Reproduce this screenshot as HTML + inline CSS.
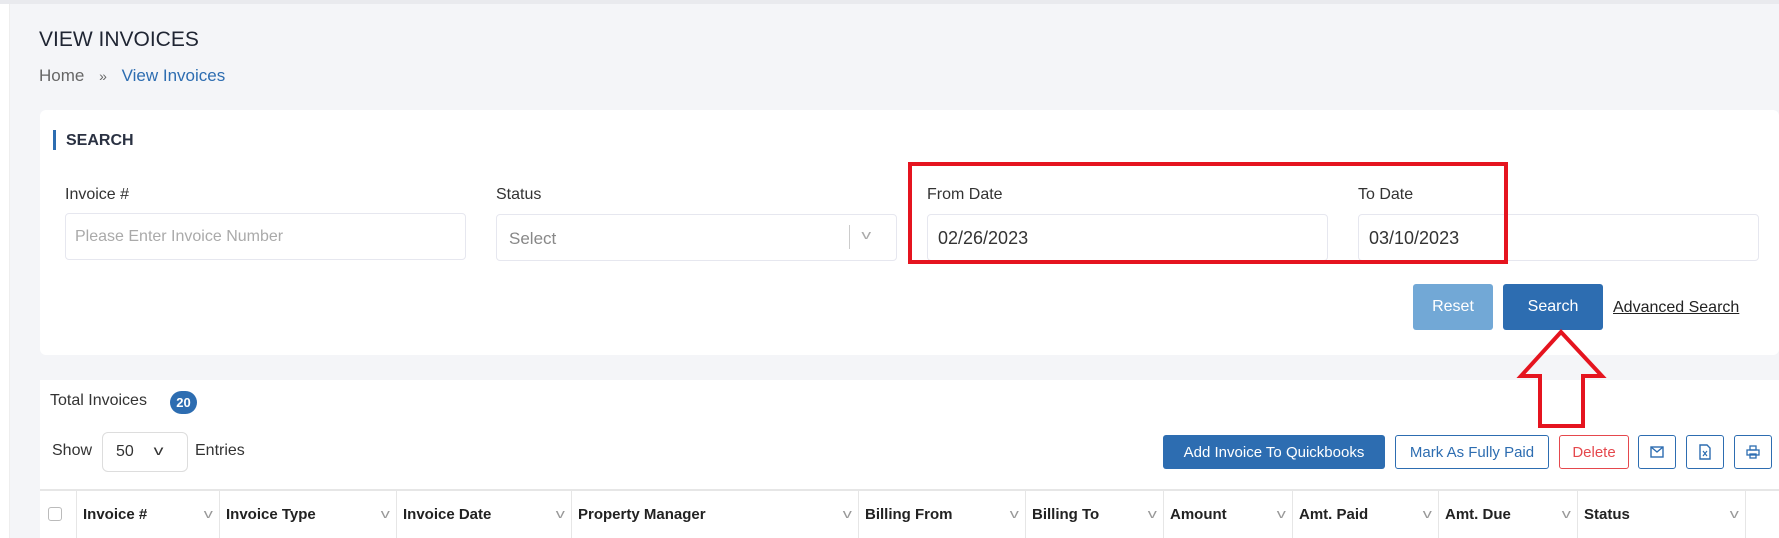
<!DOCTYPE html>
<html><head><meta charset="utf-8"><style>
*{box-sizing:border-box;margin:0;padding:0}
body{width:1779px;height:538px;overflow:hidden;background:#f4f5f8;font-family:"Liberation Sans",sans-serif;position:relative;color:#333}
.a{position:absolute}
.lbl{font-size:16px;color:#333}
.inp{position:absolute;border:1px solid #e6e7ef;border-radius:4px;background:#fff;height:47px}
.btn{position:absolute;border-radius:3px;font-size:15px;display:flex;align-items:center;justify-content:center}
.th{position:absolute;top:490px;height:48px;border-left:1px solid #e6e6e6;font-size:15px;font-weight:bold;color:#222;display:flex;align-items:center;padding-left:6px}
.th .c{position:absolute;right:8px;top:16px;color:#999;font-weight:normal;font-size:13px;transform:scaleX(1.4)}
</style></head><body>
<div class="a" style="left:0;top:0;width:1779px;height:4px;background:#e9eaee"></div>
<div class="a" style="left:0;top:4px;width:10px;height:534px;background:#fff;border-right:1px solid #eee"></div>
<div class="a" style="left:39px;top:28px;font-size:21px;color:#1f2533">VIEW INVOICES</div>
<div class="a" style="left:39px;top:66px;font-size:17px;color:#666">Home <span style="margin:0 10px;font-size:14px">»</span> <span style="color:#2d6db1">View Invoices</span></div>

<div class="a" style="left:40px;top:110px;width:1739px;height:245px;background:#fff;border-radius:6px"></div>
<div class="a" style="left:53px;top:130px;width:3px;height:20px;background:#2d6db1"></div>
<div class="a" style="left:66px;top:132px;font-size:16px;font-weight:bold;color:#2a3142">SEARCH</div>
<div class="a lbl" style="left:65px;top:186px">Invoice #</div>
<div class="a lbl" style="left:496px;top:186px">Status</div>
<div class="a lbl" style="left:927px;top:186px">From Date</div>
<div class="a lbl" style="left:1358px;top:186px">To Date</div>
<div class="inp" style="left:65px;top:213px;width:401px"><span class="a" style="left:9px;top:14px;font-size:16px;color:#aaa">Please Enter Invoice Number</span></div>
<div class="inp" style="left:496px;top:214px;width:401px"><span class="a" style="left:12px;top:14px;font-size:17px;color:#888">Select</span><span class="a" style="left:352px;top:10px;width:1px;height:24px;background:#ccc"></span><span class="a" style="left:366px;top:12px;color:#aaa;font-size:13px;transform:scaleX(1.5)">v</span></div>
<div class="inp" style="left:927px;top:214px;width:401px"><span class="a" style="left:10px;top:13px;font-size:18px;color:#333">02/26/2023</span></div>
<div class="inp" style="left:1358px;top:214px;width:401px"><span class="a" style="left:10px;top:13px;font-size:18px;color:#333">03/10/2023</span></div>
<div class="a" style="left:908px;top:162px;width:600px;height:102px;border:4px solid #e5141f"></div>
<div class="btn" style="left:1413px;top:284px;width:80px;height:46px;background:#72a8d6;color:#fff;font-size:16px">Reset</div>
<div class="btn" style="left:1503px;top:284px;width:100px;height:46px;background:#2d6db1;color:#fff;font-size:16px">Search</div>
<div class="a" style="left:1613px;top:299px;font-size:16px;color:#222;text-decoration:underline">Advanced Search</div>

<div class="a" style="left:40px;top:380px;width:1739px;height:158px;background:#fff"></div>
<svg class="a" style="left:1516px;top:328px" width="92" height="100"><polygon points="45,4 86,48 67,48 67,98 24,98 24,48 5,48" fill="none" stroke="#e5141f" stroke-width="4"/></svg>
<div class="a" style="left:50px;top:392px;font-size:16px;color:#333">Total Invoices</div>
<div class="a" style="left:170px;top:391px;width:27px;height:23px;border-radius:12px;background:#2d6db1;color:#fff;font-size:13px;font-weight:bold;text-align:center;line-height:23px">20</div>
<div class="a" style="left:52px;top:442px;font-size:16px">Show</div>
<div class="a" style="left:102px;top:432px;width:86px;height:40px;border:1px solid #ddd;border-radius:6px"><span class="a" style="left:13px;top:10px;font-size:16px">50</span><span class="a" style="left:52px;top:9px;font-size:14px;transform:scaleX(1.4)">v</span></div>
<div class="a" style="left:195px;top:442px;font-size:16px">Entries</div>
<div class="btn" style="left:1163px;top:435px;width:222px;height:34px;background:#2d6db1;color:#fff">Add Invoice To Quickbooks</div>
<div class="btn" style="left:1395px;top:435px;width:154px;height:34px;border:1px solid #2d6db1;color:#2d6db1">Mark As Fully Paid</div>
<div class="btn" style="left:1559px;top:435px;width:70px;height:34px;border:1px solid #e5484d;color:#e5484d">Delete</div>
<div class="btn" style="left:1638px;top:435px;width:38px;height:34px;border:1px solid #2d6db1"><svg width="14" height="12"><rect x="1" y="1" width="12" height="10" fill="none" stroke="#2d6db1" stroke-width="1.4"/><path d="M1 1l6 5 6-5" fill="none" stroke="#2d6db1" stroke-width="1.4"/></svg></div>
<div class="btn" style="left:1686px;top:435px;width:38px;height:34px;border:1px solid #2d6db1"><svg width="12" height="16"><path d="M1 1h7l3 3v11H1z" fill="none" stroke="#2d6db1" stroke-width="1.4"/><path d="M4 7l4 5M8 7l-4 5" stroke="#2d6db1" stroke-width="1.2"/></svg></div>
<div class="btn" style="left:1734px;top:435px;width:38px;height:34px;border:1px solid #2d6db1"><svg width="14" height="14"><rect x="4" y="1" width="6" height="4" fill="none" stroke="#2d6db1" stroke-width="1.3"/><rect x="1" y="5" width="12" height="5" fill="none" stroke="#2d6db1" stroke-width="1.3"/><rect x="4" y="9" width="6" height="4" fill="none" stroke="#2d6db1" stroke-width="1.3"/></svg></div>

<div class="a" style="left:40px;top:489px;width:1739px;height:2px;background:#e6e6e6"></div>
<div class="th" style="left:40px;width:36px;border-left:none"><span style="width:14px;height:14px;border:1px solid #bbb;border-radius:3px;margin-left:2px"></span></div>
<div class="th" style="left:76px;width:143px">Invoice #<span class="c">v</span></div>
<div class="th" style="left:219px;width:177px">Invoice Type<span class="c">v</span></div>
<div class="th" style="left:396px;width:175px">Invoice Date<span class="c">v</span></div>
<div class="th" style="left:571px;width:287px">Property Manager<span class="c">v</span></div>
<div class="th" style="left:858px;width:167px">Billing From<span class="c">v</span></div>
<div class="th" style="left:1025px;width:138px">Billing To<span class="c">v</span></div>
<div class="th" style="left:1163px;width:129px">Amount<span class="c">v</span></div>
<div class="th" style="left:1292px;width:146px">Amt. Paid<span class="c">v</span></div>
<div class="th" style="left:1438px;width:139px">Amt. Due<span class="c">v</span></div>
<div class="th" style="left:1577px;width:168px">Status<span class="c">v</span></div>
<div class="th" style="left:1745px;width:34px"></div>
</body></html>
